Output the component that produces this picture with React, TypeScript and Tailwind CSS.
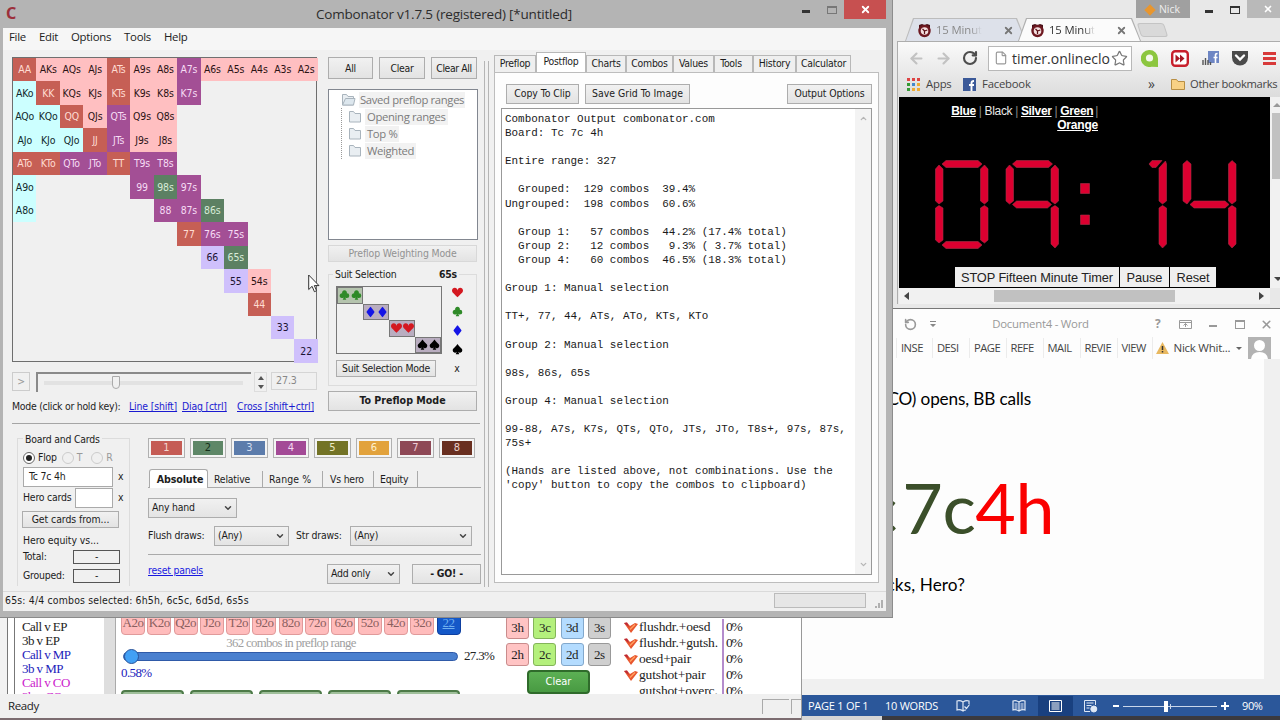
import type { ReactNode } from 'react';
import { clsx } from 'clsx';
import { BsSuitHeartFill, BsSuitClubFill, BsSuitDiamondFill, BsSuitSpadeFill } from 'react-icons/bs';
import { ArrowLeft, ArrowRight, ChevronDown, ChevronUp, RotateCw, RotateCcw, Star, File, X } from 'lucide-react';

const RANKS = 'AKQJT98765432';

// r = group 1, g = group 2, p = group 4, s = suited, o = offsuit, v = pair, . = not in range
const GRID = [
  'rsssrsspsssss',
  'orssrssp.....',
  'oorspss......',
  'ooorpss......',
  'rrpprpp......',
  'o....pgp.....',
  'o.....ppg....',
  '.......rpp...',
  '........vg...',
  '.........vs..',
  '..........r..',
  '...........v.',
  '............v',
];

const CELL_STYLES: Record<string, string> = {
  r: 'bg-[#c65f55] text-[#ffdcd2]',
  g: 'bg-[#5c8063] text-[#d8ecd8]',
  p: 'bg-[#a34f95] text-[#f6dcf4]',
  s: 'bg-[#ffbfc1] text-[#2b1214]',
  o: 'bg-[#ccffff] text-[#10282c]',
  v: 'bg-[#cfc0fc] text-[#1c1433]',
  '.': '',
};

const OUTPUT = `Combonator Output combonator.com
Board: Tc 7c 4h

Entire range: 327

  Grouped:  129 combos  39.4%
Ungrouped:  198 combos  60.6%

  Group 1:   57 combos  44.2% (17.4% total)
  Group 2:   12 combos   9.3% ( 3.7% total)
  Group 4:   60 combos  46.5% (18.3% total)

Group 1: Manual selection

TT+, 77, 44, ATs, ATo, KTs, KTo

Group 2: Manual selection

98s, 86s, 65s

Group 4: Manual selection

99-88, A7s, K7s, QTs, QTo, JTs, JTo, T8s+, 97s, 87s,
75s+

(Hands are listed above, not combinations. Use the
'copy' button to copy the combos to clipboard)`;

const handName = (r: number, c: number) => {
  if (r === c) return RANKS[r] + RANKS[r];
  return r < c ? RANKS[r] + RANKS[c] + 's' : RANKS[c] + RANKS[r] + 'o';
};

function Btn({ children, className }: { children?: ReactNode; className?: string }) {
  return (
    <div className={clsx('flex shrink-0 items-center justify-center whitespace-nowrap border border-[#adadad] bg-gradient-to-b from-[#f1f1f1] to-[#e3e3e3]', className)}>
      {children}
    </div>
  );
}

function Select({ children, className }: { children: ReactNode; className?: string }) {
  return (
    <div className={clsx('flex shrink-0 items-center justify-between border border-[#adadad] bg-gradient-to-b from-[#f1f1f1] to-[#e4e4e4] pl-[3px] pr-[3px]', className)}>
      <span>{children}</span>
      <ChevronDown className="h-[10px] w-[10px] text-[#444]" strokeWidth={3.5} />
    </div>
  );
}

function HandGrid() {
  return (
    <div className="h-[305px] w-[305px] border border-[#6e6e6e]">
      <div className="grid grid-cols-[repeat(13,23.46px)] grid-rows-[repeat(13,23.46px)] text-[10.4px] tracking-[-0.1px]">
        {GRID.map((row, r) =>
          row.split('').map((kind, c) => (
            <div key={`${r}-${c}`} className={clsx('flex items-center justify-center overflow-hidden whitespace-nowrap pt-px', CELL_STYLES[kind])}>
              {kind !== '.' && handName(r, c)}
            </div>
          )),
        )}
      </div>
    </div>
  );
}

function Folder({ open }: { open?: boolean }) {
  return (
    <svg className="h-[13px] w-[15px] shrink-0" viewBox="0 0 15 13" fill="#e9eef2" stroke="#a9b4bd">
      <path d="M1.5 12V1.5h4l1.5 2h5.5V12z" />
      {open && <path d="M1.5 12l3-6.5h9.5L12.5 12z" fill="#dde7ee" />}
    </svg>
  );
}

function RangeTree() {
  return (
    <div className="mt-[10px] flex h-[151px] w-[150px] flex-col border border-[#828790] bg-white pt-px font-['Open_Sans',sans-serif] text-[11.3px] tracking-[-0.35px] text-[#7b7b7b] [font-stretch:normal]">
      <div className="flex h-[17px] items-center gap-[3px] pl-[12px]">
        <Folder open />
        <span className="bg-[#f2f2f2] px-[1px] leading-[16px]">Saved preflop ranges</span>
      </div>
      <div className="ml-[12px] border-l border-dotted border-[#999] pl-[6px]">
        {['Opening ranges', 'Top %', 'Weighted'].map((t) => (
          <div key={t} className="flex h-[17px] items-center gap-[2px]">
            <Folder />
            <span className="bg-[#f2f2f2] px-[2px] leading-[16px]">{t}</span>
          </div>
        ))}
      </div>
    </div>
  );
}

const SUITS = [
  { Icon: BsSuitClubFill, color: 'text-[#2f8a28]' },
  { Icon: BsSuitDiamondFill, color: 'text-[#1414e6]' },
  { Icon: BsSuitHeartFill, color: 'text-[#d41820]' },
  { Icon: BsSuitSpadeFill, color: 'text-black' },
];

function SuitSelection() {
  return (
    <fieldset className="mt-[5px] h-[119px] w-[149px] border border-[#dcdcdc] pl-[7px]">
      <legend className="-ml-[3px] flex h-[14px] w-[126px] items-center justify-between px-[2px] pt-px">
        <span>Suit Selection</span>
        <b className="text-[10.4px]">65s</b>
      </legend>
      <div className="flex">
        <div className="pt-[5px]">
          <div className="grid h-[68px] w-[106px] grid-cols-4 grid-rows-4 border border-[#777]">
            {SUITS.map(({ Icon, color }, r) =>
              SUITS.map((_, c) => (
                <div key={`${r}-${c}`} className={clsx('flex items-center justify-center gap-px', r === c && 'border border-[#777]', r === c && (r === 0 ? 'bg-[#b5c4ae]' : 'bg-[#b9adc0]'))}>
                  {r === c && <Icon className={clsx('h-[12px] w-[11px]', color)} />}
                  {r === c && <Icon className={clsx('h-[12px] w-[11px]', color)} />}
                </div>
              )),
            )}
          </div>
          <Btn className="mt-[6px] h-[17px] w-[100px] tracking-[-0.25px]">Suit Selection Mode</Btn>
        </div>
        <div className="ml-[8px] flex flex-col items-center pt-[2px]">
          {[SUITS[2], SUITS[0], SUITS[1], SUITS[3]].map(({ Icon, color }, i) => (
            <div key={i} className="flex h-[19px] w-[14px] items-center justify-center">
              <Icon className={clsx('h-[11px] w-[11px]', color)} />
            </div>
          ))}
          <span className="mt-[2px]">x</span>
        </div>
      </div>
    </fieldset>
  );
}

const GROUP_COLORS = [
  'bg-[#c55c55] text-[#f3d6cf]',
  'bg-[#5e8767] text-[#15301a]',
  'bg-[#5c7cab] text-[#d3def0]',
  'bg-[#a34a96] text-[#f4d8f0]',
  'bg-[#737326] text-[#ecebc4]',
  'bg-[#e2a23c] text-[#fff0cc]',
  'bg-[#8e4856] text-[#f0ccd4]',
  'bg-[#692f20] text-[#ecd3cb]',
];

function BoardPanel() {
  return (
    <fieldset className="ml-[14px] h-[154px] w-[113px] shrink-0 border border-b-0 border-[#dcdcdc] pl-[5px]">
      <legend className="px-[2px] pt-px leading-[12px]">Board and Cards</legend>
      <div className="mt-[6px] flex h-[13px] items-center">
        <span className="mr-[3px] flex h-[12px] w-[12px] items-center justify-center rounded-full border border-[#666] bg-white">
          <span className="h-[6px] w-[6px] rounded-full bg-[#222]" />
        </span>
        <span>Flop</span>
        <span className="ml-[5px] mr-[3px] h-[12px] w-[12px] rounded-full border border-[#ccc]" />
        <span className="text-[#999]">T</span>
        <span className="ml-[9px] mr-[3px] h-[12px] w-[12px] rounded-full border border-[#ccc]" />
        <span className="text-[#999]">R</span>
      </div>
      <div className="mt-[3px] flex h-[20px] items-center">
        <div className="flex h-[20px] w-[90px] items-center border border-[#aaa] bg-white pl-[5px]">Tc 7c 4h</div>
        <span className="ml-[5px]">x</span>
      </div>
      <div className="mt-px flex h-[20px] items-center">
        <span className="w-[52px]">Hero cards</span>
        <div className="h-[20px] w-[38px] border border-[#aaa] bg-white" />
        <span className="ml-[5px]">x</span>
      </div>
      <Btn className="-ml-px mt-[3px] h-[17px] w-[97px] tracking-[-0.05px]">Get cards from...</Btn>
      <div className="mt-[6px] leading-[13px] tracking-[-0.05px]">Hero equity vs...</div>
      {['Total:', 'Grouped:'].map((t) => (
        <div key={t} className="mt-px flex h-[18px] items-center">
          <span className="w-[50px]">{t}</span>
          <div className="flex h-[14px] w-[47px] items-center justify-center border border-[#555]">-</div>
        </div>
      ))}
    </fieldset>
  );
}

function FilterPanel() {
  return (
    <div className="ml-[18px] w-[333px]">
      <div className="mt-[6px] flex gap-[5px]">
        {GROUP_COLORS.map((c, i) => (
          <div key={c} className="h-[20px] w-[36.5px] border border-[#b0b0b0] bg-[#f4f4f4] p-[2px]">
            <div className={clsx('flex h-full items-center justify-center text-[11px]', c)}>{i + 1}</div>
          </div>
        ))}
      </div>
      <div className="mt-[11px] flex h-[19px] items-center border-b border-[#aaa] pt-px">
        <b className="ml-px flex h-[19px] w-[59px] items-center justify-center rounded-t-[3px] border border-b-0 border-[#aaa] bg-white pl-[3px] pt-px text-[10.6px] tracking-[-0.1px]">Absolute</b>
        <span className="w-[55px] border-r border-[#aaa] pl-[6px] pt-px leading-[15px]">Relative</span>
        <span className="w-[60px] border-r border-[#aaa] pl-[6px] pt-px leading-[15px] tracking-[0.1px]">Range %</span>
        <span className="w-[51px] border-r border-[#aaa] pl-[7px] pt-px leading-[15px]">Vs hero</span>
        <span className="w-[44px] border-r border-[#aaa] pl-[6px] pt-px leading-[15px]">Equity</span>
      </div>
      <Select className="mt-[10px] h-[20px] w-[89px]">Any hand</Select>
      <div className="mt-[8px] flex h-[20px] items-center">
        <span className="w-[66px] tracking-[-0.2px]">Flush draws:</span>
        <Select className="h-[20px] w-[75px]">(Any)</Select>
        <span className="ml-[7px] w-[54px]">Str draws:</span>
        <Select className="h-[20px] w-[122px]">(Any)</Select>
      </div>
      <div className="mt-[8px] border-b border-[#aaa]" />
      <div className="mt-[9px] flex h-[20px]">
        <span className="w-[179px] leading-[13px] text-[#1a1ae0] underline">reset panels</span>
        <Select className="h-[20px] w-[73px]">Add only</Select>
        <Btn className="ml-[12px] h-[20px] w-[69px] font-bold">- GO! -</Btn>
      </div>
    </div>
  );
}

const TABS: [string, string][] = [
  ['Preflop', 'w-[42px]'],
  ['Postflop', 'w-[50px]'],
  ['Charts', 'w-[40px]'],
  ['Combos', 'w-[47px]'],
  ['Values', 'w-[41px]'],
  ['Tools', 'w-[39px]'],
  ['History', 'w-[43px]'],
  ['Calculator', 'w-[55px]'],
];

function OutputPanel() {
  return (
    <div className="ml-[5px] w-[385px]">
      <div className="flex h-[20px] items-end">
        {TABS.map(([t, w]) => (
          <div
            key={t}
            className={clsx(
              'flex shrink-0 items-center justify-center border border-b-0 border-[#b8b8b8] tracking-[-0.25px]',
              w,
              t === 'Postflop' ? 'h-[20px] bg-white pb-[2px]' : t === 'Tools' ? 'h-[17px] bg-[#efefef] pr-[5px]' : 'h-[17px] bg-[#efefef]',
            )}
          >
            {t}
          </div>
        ))}
      </div>
      <div className="flex h-[511px] flex-col border border-[#bdbdbd] bg-[#fdfdfd] px-[6px] pb-[7px] pt-[11px]">
        <div className="flex">
          <Btn className="ml-[5px] h-[20px] w-[73px] tracking-[-0.05px]">Copy To Clip</Btn>
          <Btn className="ml-[6px] h-[20px] w-[105px] tracking-[0.03px]">Save Grid To Image</Btn>
          <Btn className="ml-auto h-[20px] w-[85px] tracking-[-0.1px]">Output Options</Btn>
        </div>
        <div className="mt-[4px] flex flex-1 justify-between border border-[#999] bg-white">
          <pre className="pl-[3px] pt-[3px] font-['Liberation_Mono',monospace] text-[10.93px] leading-[14.1px] tracking-normal text-[#1a1a1a]">{OUTPUT}</pre>
          <div className="flex w-[16px] flex-col items-center justify-between bg-[#f3f3f3] py-[5px]">
            <ChevronUp className="h-[9px] w-[9px] text-[#b5b5b5]" strokeWidth={3.5} />
            <ChevronDown className="h-[9px] w-[9px] text-[#b5b5b5]" strokeWidth={3.5} />
          </div>
        </div>
      </div>
    </div>
  );
}

function Combonator() {
  return (
    <div className="absolute left-0 top-0 flex h-[617px] w-[893px] flex-col border-r border-[#8d8d8d] bg-[#b4b4b4] pl-[3px] pr-[6px] shadow-[0_1px_0_#8a8a8a] font-['DejaVu_Sans_Condensed','DejaVu_Sans',sans-serif] text-[10.4px] tracking-[-0.2px] text-[#1c1c1c] [font-stretch:condensed]">
      <div className="flex h-[28px] shrink-0 [font-stretch:normal]">
        <b className="w-[120px] pl-[3px] font-['Noto_Sans',sans-serif] text-[16px] leading-[27px] text-[#9c2f3b]">C</b>
        <span className="w-[642px] text-center font-['Open_Sans',sans-serif] text-[13.5px] leading-[28px] tracking-[-0.2px] text-[#2c2c2c]">
          Combonator v1.7.5 (registered) [*untitled]
        </span>
        <div className="ml-[37px] mt-[10px] h-[3px] w-[8px] bg-[#333]" />
        <div className="ml-[17px] mt-[6px] h-[8px] w-[10px] border border-t-2 border-[#777]" />
        <div className="ml-[7px] flex h-[19px] w-[42px] items-center justify-center bg-[#c75050]">
          <X className="h-[11px] w-[11px] text-white" strokeWidth={4} />
        </div>
      </div>

      <div className="flex h-[583px] flex-col bg-[#f0f0f0]">
        <div className="flex h-[22px] shrink-0 gap-[13px] bg-[#f6f6f6] pl-[6px] font-['Open_Sans',sans-serif] text-[11.4px] leading-[18px] tracking-[-0.28px] text-[#222] [font-stretch:normal]">
          {['File', 'Edit', 'Options', 'Tools', 'Help'].map((m) => (
            <span key={m}>{m}</span>
          ))}
        </div>

        <div className="flex h-[541px]">
          <div className="w-[481px]">
            <div className="ml-[9px] flex h-[374px] w-[468px] border-b border-[#a5a5a5] pt-[7px]">
              <div className="w-[305px] shrink-0">
                <HandGrid />
                <div className="mt-[10px] flex h-[20px]">
                  <div className="flex h-[19px] w-[18px] items-center justify-center border border-[#ccc] text-[#999]">&gt;</div>
                  <div className="ml-[6px] flex w-[215px] items-center border-l-2 border-t-2 border-[#8a8a8a] pl-[6px] pr-[8px]">
                    <div className="relative h-[4px] w-full bg-[#e2e2e2]">
                      <div className="absolute left-[68px] top-[-5px] h-[13px] w-[8px] rounded-b-[4px] border border-[#aaa] bg-[#f0f0f0]" />
                    </div>
                  </div>
                  <div className="ml-[3px] flex w-[13px] flex-col items-center justify-center gap-[5px] border border-[#ddd]">
                    <i className="border-x-[3px] border-b-[4px] border-x-transparent border-b-[#555]" />
                    <i className="border-x-[3px] border-t-[4px] border-x-transparent border-t-[#555]" />
                  </div>
                  <div className="ml-[4px] flex h-[18px] flex-1 items-center border border-[#d5d5d5] pl-[4px] text-[10.6px] tracking-[-0.1px] text-[#888]">27.3</div>
                </div>
                <div className="mt-[7px] flex whitespace-nowrap leading-[14px] tracking-[-0.25px]">
                  <span className="w-[117px]">Mode (click or hold key):</span>
                  <span className="w-[53px] tracking-[-0.15px] text-[#1a1ad0] underline">Line [shift]</span>
                  <span className="w-[55px] tracking-[-0.2px] text-[#1a1ad0] underline">Diag [ctrl]</span>
                  <span className="tracking-[-0.12px] text-[#1a1ad0] underline">Cross [shift+ctrl]</span>
                </div>
              </div>
              <div className="ml-[11px] w-[150px] shrink-0">
                <div className="flex gap-[6px]">
                  <Btn className="h-[22px] w-[45px] pt-[2px]">All</Btn>
                  <Btn className="h-[22px] w-[46px] pt-[2px] tracking-[-0.3px]">Clear</Btn>
                  <Btn className="h-[22px] w-[46px] pt-[2px] tracking-[-0.4px]">Clear All</Btn>
                </div>
                <RangeTree />
                <Btn className="mt-[5px] h-[17px] w-[149px] border-[#d8d8d8] pt-px tracking-[-0.12px] text-[#929292]">Preflop Weighting Mode</Btn>
                <SuitSelection />
                <Btn className="mt-[5px] h-[20px] w-[149px] text-[10.6px] font-bold tracking-normal">To Preflop Mode</Btn>
              </div>
            </div>
            <div className="flex pt-[8px]">
              <BoardPanel />
              <FilterPanel />
            </div>
          </div>
          <div className="mt-[11px] h-[526px] w-[5px] border-x border-[#b5b5b5]" />
          <div className="pt-[2px]">
            <OutputPanel />
          </div>
        </div>

        <div className="flex h-[20px] items-center border-t border-[#dadada] pb-px pl-[2px] tracking-[0.18px]">
          <span>65s: 4/4 combos selected: 6h5h, 6c5c, 6d5d, 6s5s</span>
          <div className="mb-px ml-auto mr-[9px] h-[15px] w-[92px] border border-[#bbb] bg-[#e6e6e6]" />
          <svg className="mr-[2px] mt-[5px] h-[9px] w-[9px]" viewBox="0 0 9 9" fill="#b0b0b0">
            <path d="M0 7h2v2H0zM3 4h2v5H3zM6 1h2v8H6z" />
          </svg>
        </div>
      </div>
    </div>
  );
}

const SAVED: [string, string][] = [
  ['Call v EP', 'text-[#222]'],
  ['3b v EP', 'text-[#222]'],
  ['Call v MP', 'text-[#2222bb]'],
  ['3b v MP', 'text-[#2222bb]'],
  ['Call v CO', 'text-[#cc22cc]'],
  ['3b v CO', 'text-[#cc22cc]'],
];

const CARD_COLORS: [string, string][] = [
  ['h', 'bg-[#ffc4c4] border-[#c98c8c]'],
  ['c', 'bg-[#b4f07c] border-[#84b45a]'],
  ['d', 'bg-[#b4dcff] border-[#82a8cc]'],
  ['s', 'bg-[#cfcfcf] border-[#999999]'],
];

function Check({ hidden }: { hidden?: boolean }) {
  return (
    <svg className={clsx('mr-px h-[11px] w-[14px] shrink-0', hidden && 'invisible')} viewBox="0 0 14 11">
      <path d="M0 1l3-.5 3 3.500 5-3 3 1-7 9z" fill="#e8562e" />
      <path d="M0 1l3-.5 2 4.500z" fill="#b8283c" />
      <path d="M6 7.500l5-5" stroke="#ffa060" strokeWidth="1.500" />
    </svg>
  );
}

function RangeTool() {
  return (
    <div className="absolute left-0 top-[600px] flex h-[120px] w-[802px] flex-col border-r border-[#999] bg-white font-['Liberation_Serif',serif] text-[13.5px] text-[#222]">
      <div className="flex h-[94px] shrink-0 overflow-hidden">
        <div className="w-[8px] border-r border-[#777] bg-[#f2f2f2]" />
        <div className="w-[7px] border-r border-[#777]" />
        <div className="w-[89px] pl-[7px] pt-[20px] text-[13px] leading-[14.1px] tracking-[-0.55px]">
          {SAVED.map(([t, c]) => (
            <div key={t} className={c}>{t}</div>
          ))}
        </div>
        <div className="w-[12px] border-r border-[#aaa] bg-[#dedede]" />
        <div className="ml-[5px] w-[380px]">
          <div className="mt-[11px] flex gap-[2.3px] text-[#8a5f5f]">
            {'AKQJT98765432'.split('').map((r) => (
              <div
                key={r}
                className={clsx(
                  'flex h-[24px] w-[24px] shrink-0 items-center justify-center rounded-[4px] border text-[13px] tracking-[-0.5px]',
                  r === '2' ? 'border-[#0e3fa0] bg-[#1458c8] text-[#6fb0f0] underline' : 'border-[#e09a9a] bg-[#ffbcbc]',
                )}
              >
                {r === '2' ? '22' : r + '2o'}
              </div>
            ))}
          </div>
          <div className="w-[340px] text-center text-[12.8px] leading-[16px] tracking-[-0.65px] text-[#a0a0a0]">362 combos in preflop range</div>
          <div className="flex h-[10px] items-center">
            <div className="relative ml-[2px] h-[9px] w-[335px] rounded-full border border-[#2f5aa8] bg-[#4a80cf]">
              <div className="absolute -top-[4px] left-0 h-[15px] w-[15px] rounded-full border border-[#2a5298] bg-[#42a0f5]" />
            </div>
            <span className="ml-[6px] text-[13px] tracking-[-0.7px]">27.3%</span>
          </div>
          <div className="mt-[4px] text-[13px] leading-[16px] tracking-[-0.6px] text-[#2222bb]">0.58%</div>
          <div className="mt-[9px] flex gap-[6px]">
            {[0, 1, 2, 3, 4].map((i) => (
              <div key={i} className="h-[20px] w-[63px] rounded-[4px] border-2 border-[#4d7a48] bg-[#9fbf9a]" />
            ))}
          </div>
        </div>
        <div className="ml-[5px] w-[118px] pt-[16px]">
          {['3', '2'].map((r) => (
            <div key={r} className="mb-[4px] flex gap-[4.3px] text-[13px] tracking-[-0.3px]">
              {CARD_COLORS.map(([s, c]) => (
                <div key={s} className={clsx('flex h-[23px] w-[23px] items-center justify-center rounded-[3px] border pt-px', c)}>{r + s}</div>
              ))}
            </div>
          ))}
          <div className="ml-[21px] flex h-[24px] w-[63px] items-center justify-center rounded-[4px] border-2 border-[#2f6b2b] bg-gradient-to-b from-[#5cb054] to-[#489a42] font-['DejaVu_Sans_Condensed','DejaVu_Sans',sans-serif] text-[11px] text-white [font-stretch:condensed]">
            Clear
          </div>
        </div>
        <div className="flex pt-[19px] leading-[16.1px]">
          <div className="w-[100px] border-r-2 border-[#b48ccc]">
            {['flushdr.+oesd', 'flushdr.+gutsh.', 'oesd+pair', 'gutshot+pair', 'gutshot+overc.'].map((t, i) => (
              <div key={t} className="flex h-[16.1px] items-center whitespace-nowrap tracking-[-0.15px]">
                <Check hidden={i === 4} />
                {t}
              </div>
            ))}
          </div>
          <div className="pl-[2px] tracking-[-1.2px]">
            {[0, 1, 2, 3, 4].map((i) => (
              <div key={i}>0%</div>
            ))}
          </div>
        </div>
      </div>
      <div className="flex h-[24px] items-center bg-[#f0f0f0] pl-[8px] font-['Open_Sans',sans-serif] text-[11.5px] tracking-[-0.4px]">
        Ready
        <div className="ml-auto h-[15px] w-[27px] border-l border-t border-[#aaa]" />
        <div className="ml-[2px] h-[15px] w-[10px] border-l border-t border-[#aaa]" />
      </div>
      <div className="h-[2px] bg-[#7c6c70]" />
    </div>
  );
}

function Clock() {
  return (
    <svg className="h-[15px] w-[13px] shrink-0" viewBox="0 0 13 15">
      <path d="M1 2l3-1 2.5 1L9 1l3 1v3H1z" fill="#4a1219" />
      <circle cx="6.5" cy="8" r="5" fill="#f3dede" stroke="#6d1820" strokeWidth="2.4" />
      <path d="M6.5 8L4.5 5.8M6.5 8l2.8-1M6.5 8v3" stroke="#5a1016" strokeWidth="1.2" />
    </svg>
  );
}

// Bars of a seven segment digit, 53x89
const SEGMENTS = {
  a: '7,4 11,0.5 43,0.5 47,4 43,7.5 11,7.5',
  b: '49.5,5 53,9 53,41 49.5,44 45.5,41 45.5,9',
  c: '49.5,45.5 53,48 53,80 49.5,83 45.5,80 45.5,48',
  d: '7,85 11,81.5 43,81.5 47,85 43,88.5 11,88.5',
  e: '4,45.5 8,48 8,80 4,83 0.5,80 0.5,48',
  f: '4,5 8,9 8,41 4,44 0.5,41 0.5,9',
  g: '7,44.5 11,41 42,41 46,44.5 42,48 11,48',
};

function Digit({ segs, x }: { segs: string; x: number }) {
  return (
    <g transform={`translate(${x} 0)`}>
      {segs.split('').map((s) => (
        <polygon key={s} points={SEGMENTS[s as keyof typeof SEGMENTS]} />
      ))}
    </g>
  );
}

function Timer() {
  return (
    <svg className="ml-[36px] mt-[28px] h-[90px] w-[303px]" viewBox="0 0 303 90" fill="#dc0030" stroke="#a83048" strokeWidth="0.6">
      <Digit segs="abcdef" x={0} />
      <Digit segs="abfg" x={70.5} />
      <polygon points="120,45.5 123.5,48 123.5,84 120,88 116,84 116,48" />
      <path d="M145.5 23.500h9v10h-9zM145.5 55h9v9.500h-9z" />
      <polygon points="214,4 217,0.5 227,0.5 221,7.5 217,7.5" />
      <polygon points="230.5,1 231.5,4 231.5,41 227.5,44 224,41 224,8" />
      <polygon points="227.5,45.5 231.5,48 231.5,84 227.5,88 224,84 224,48" />
      <polygon points="252,0.5 256,4 256,39 252,44 248,41 248,4" />
      <polygon points="255,44.5 259,41 290,41 294,44.5 290,48 259,48" />
      <polygon points="297,0.5 301,4 301,41 297,44 293.5,41 293.5,4" />
      <polygon points="297,45.5 301,48 301,84 297,88 293.5,84 293.5,48" />
    </svg>
  );
}

function ChromeTab({ active }: { active?: boolean }) {
  return (
    <div className={clsx('h-[23px] shrink-0 p-px pb-0 [clip-path:polygon(0_100%,8px_0,calc(100%-9px)_0,100%_100%)]', active ? '-ml-[8px] w-[123px] bg-[#b0b0b0]' : 'w-[121px] bg-[#bcbcbc]')}>
      <div className={clsx('flex h-full items-center pl-[12px] [clip-path:polygon(0_100%,8px_0,calc(100%-9px)_0,100%_100%)]', active ? 'bg-[#fbfbfb] text-[#333]' : 'bg-[#dde1ea] text-[#8a8a8a]')}>
        <Clock />
        <span className="ml-[5px] w-[46px] overflow-hidden whitespace-nowrap text-[11.3px] tracking-[-0.1px] [mask-image:linear-gradient(to_right,black_75%,transparent)]">15 Minute</span>
        <X className="ml-[21px] h-[11px] w-[11px] text-[#777]" strokeWidth={4} />
      </div>
    </div>
  );
}

function AppsIcon() {
  const colors = ['#d44', '#d44', '#d44', '#393', '#48c', '#ea3', '#393', '#ea3', '#ea3'];
  return (
    <svg className="h-[13px] w-[13px]" viewBox="0 0 13 13">
      {colors.map((c, i) => (
        <rect key={i} x={(i % 3) * 5} y={Math.floor(i / 3) * 5} width="3" height="3" fill={c} />
      ))}
    </svg>
  );
}

function Chrome() {
  return (
    <div className="absolute left-[893px] top-0 flex h-[309px] w-[387px] flex-col border-b border-[#777] bg-[#e8e8e8] font-['Open_Sans',sans-serif] text-[#333]">
      <div className="relative flex h-[41px] shrink-0 items-end pl-[12px]">
        <ChromeTab />
        <ChromeTab active />
        <div className="mb-[4px] ml-[-2px] h-[14px] w-[27px] skew-x-[18deg] rounded-[3px] border border-[#c4c4c4] bg-[#d9d9d9]" />
        <div className="absolute right-0 top-0 flex">
          <div className="flex h-[18px] w-[54px] items-center justify-center gap-[5px] bg-[#a0a0a0] pt-[2px] text-[10.5px] text-[#eee]">
            <span className="h-[8px] w-[8px] rotate-45 bg-[#e8962e]" />
            Nick
          </div>
          <div className="ml-[15px] mt-[10px] h-[3px] w-[8px] bg-[#333]" />
          <div className="ml-[17px] mt-[6px] h-[8px] w-[10px] border border-t-2 border-[#333]" />
          <div className="ml-[7px] flex h-[18px] w-[33px] items-center justify-center bg-[#b9b9b9] pl-[9px]">
            <X className="h-[10px] w-[10px] text-white" strokeWidth={4} />
          </div>
        </div>
      </div>
      <div className="ml-[4px] h-[56px] shrink-0 border-l border-t border-[#adadad] bg-gradient-to-b from-[#fafafa] to-[#dcdcdc]">
        <div className="flex h-[32px] items-center pl-[10px]">
          <ArrowLeft className="h-[17px] w-[17px] text-[#c2c2c2]" strokeWidth={3} />
          <ArrowRight className="ml-[10px] h-[17px] w-[17px] text-[#c2c2c2]" strokeWidth={3} />
          <RotateCw className="ml-[10px] h-[16px] w-[16px] text-[#4d4d4d]" strokeWidth={3.2} />
          <div className="ml-[10px] flex h-[25px] w-[144px] shrink-0 items-center border border-[#b8b8b8] bg-white pl-[5px]">
            <File className="h-[14px] w-[14px] text-[#999]" strokeWidth={2} />
            <span className="ml-[4px] w-[99px] text-[14px] text-[#333]">timer.onlineclo</span>
            <Star className="h-[17px] w-[17px] shrink-0 text-[#777]" strokeWidth={1.7} />
          </div>
          <svg className="ml-[9px] h-[17px] w-[17px] shrink-0" viewBox="0 0 17 17">
            <path d="M8.500 0a8.500 8.500 0 1 0 2 16.700L17 17V8.500A8.500 8.500 0 0 0 8.500 0z" fill="#8cc63f" />
            <circle cx="8.500" cy="8" r="3.600" fill="#f4f8ee" />
          </svg>
          <svg className="ml-[13px] h-[17px] w-[18px] shrink-0" viewBox="0 0 18 17">
            <rect x="1.200" y="1.200" width="15.600" height="14.600" rx="3" fill="#fff" stroke="#c8202c" strokeWidth="2.400" />
            <path d="M4.500 4.500L9 8.500l-4.500 4zM9 4.500l4.500 4-4.500 4z" fill="#a81824" />
          </svg>
          <svg className="ml-[13px] h-[15px] w-[17px] shrink-0" viewBox="0 0 17 15">
            <rect x="6" width="11" height="12" fill="#6e86c4" />
            <path d="M13.500 12V6.500h2M13.500 7V4q0-1.500 2-1.500M11.500 6.500h2" stroke="#fff" strokeWidth="1.600" fill="none" />
            <path d="M1 14V9M3.500 14V7M6 14V9M8.500 14v-3" stroke="#555" strokeWidth="1.400" />
          </svg>
          <svg className="ml-[12px] h-[16px] w-[18px] shrink-0" viewBox="0 0 18 16">
            <path d="M1 1h16v6.500a8 8 0 0 1-16 0z" fill="#4b4b4b" />
            <path d="M5 5.500l4 4 4-4" stroke="#fff" strokeWidth="2.400" fill="none" strokeLinecap="round" />
          </svg>
          <div className="ml-[14px] flex h-[13px] w-[13px] shrink-0 flex-col justify-between">
            <i className="h-[3px] bg-[#d83a3a]" />
            <i className="h-[3px] bg-[#d83a3a]" />
            <i className="h-[3px] bg-[#d83a3a]" />
          </div>
        </div>
        <div className="flex h-[20px] items-center whitespace-nowrap pl-[9px] text-[11.3px] tracking-[-0.2px] text-[#444]">
          <AppsIcon />
          <span className="ml-[6px] w-[37px]">Apps</span>
          <svg className="h-[13px] w-[13px]" viewBox="0 0 13 13">
            <rect width="13" height="13" fill="#3b5998" />
            <path d="M8.500 13V5q0-2 2.500-2M6 7h5" stroke="#fff" strokeWidth="1.900" fill="none" />
          </svg>
          <span className="ml-[6px] w-[166px]">Facebook</span>
          <span className="w-[23px] text-[14px] leading-[14px]">»</span>
          <svg className="h-[12px] w-[14px]" viewBox="0 0 14 12">
            <path d="M.5 11.500V1.500h5l1.500 2h6.500v8z" fill="#f8d185" stroke="#b88f45" />
          </svg>
          <span className="ml-[5px] text-[11.2px] tracking-[-0.3px]">Other bookmarks</span>
        </div>
      </div>
      <div className="ml-[4px] flex border-l border-[#adadad] pl-px">
        <div className="h-[207px] w-[371px]">
          <div className="h-[191px] overflow-hidden bg-black font-['Liberation_Sans',sans-serif]">
            <div className="flex pl-[52px] pt-[8px] text-[12px] leading-[13.500px] tracking-[-0.35px] text-[#888]">
              <div className="w-[147px] whitespace-nowrap text-right">
                <b className="text-white underline">Blue</b> <span>|</span> <span className="text-[#e8e8e8]">Black</span> <span>|</span> <b className="text-white underline">Silver</b> <span>|</span> <b className="mr-[-1px] text-white underline">Green</b> <span>|</span>
                <br />
                <b className="tracking-[-0.2px] text-white underline">Orange</b>
              </div>
            </div>
            <Timer />
            <div className="ml-[56px] mt-[17px] flex h-[20px] text-[12.8px] tracking-[-0.1px] text-[#222]">
              <div className="flex h-[20px] w-[164px] items-center justify-center bg-[#efefef] pt-px">STOP Fifteen Minute Timer</div>
              <div className="ml-px flex h-[20px] w-[49px] items-center justify-center bg-[#efefef] pt-px">Pause</div>
              <div className="ml-px flex h-[20px] w-[46px] items-center justify-center bg-[#efefef] pt-px">Reset</div>
            </div>
          </div>
          <div className="flex h-[16px] items-center bg-[#f1f1f1] pl-[5px]">
            <i className="border-y-[4px] border-r-[5px] border-y-transparent border-r-[#444]" />
            <div className="ml-[85px] h-[12px] w-[181px] bg-[#c1c1c1]" />
            <i className="ml-[84px] border-y-[4px] border-l-[5px] border-y-transparent border-l-[#444]" />
          </div>
        </div>
        <div className="flex h-[191px] w-[10px] flex-col items-end bg-[#f1f1f1] pt-[6px]">
          <i className="mr-[-1px] border-x-[4px] border-b-[4px] border-x-transparent border-b-[#999]" />
          <div className="mt-[6px] h-[66px] w-[8px] bg-[#c1c1c1]" />
          <i className="mr-[-2px] mt-[98px] border-x-[4px] border-t-[4px] border-x-transparent border-t-[#444]" />
        </div>
      </div>
    </div>
  );
}

const RIBBON: [string, string][] = [
  ['INSE', 'w-[36px]'],
  ['DESI', 'w-[37px]'],
  ['PAGE', 'w-[36.5px]'],
  ['REFE', 'w-[37px]'],
  ['MAIL', 'w-[37px]'],
  ['REVIE', 'w-[37px]'],
  ['VIEW', 'w-[35px]'],
];

function Word() {
  return (
    <div className="absolute left-[802px] top-[309px] flex h-[411px] w-[478px] flex-col bg-[#fdfdfd] font-['Open_Sans',sans-serif] text-[#444]">
      <div className="flex h-[28px] shrink-0 items-center pl-[102px] pt-[2px] text-[#999]">
        <RotateCcw className="h-[13px] w-[13px]" strokeWidth={3} />
        <svg className="ml-[13px] h-[7px] w-[6px]" viewBox="0 0 6 7" fill="#888">
          <path d="M0 0h6v1H0zM0 3h6L3 6z" />
        </svg>
        <span className="ml-[56px] w-[97px] whitespace-nowrap text-center text-[11.4px] tracking-[-0.25px]">Document4 - Word</span>
        <b className="ml-[66px] w-[10px] text-[12px]">?</b>
        <svg className="ml-[14px] h-[9px] w-[13px]" viewBox="0 0 13 9" fill="none" stroke="#999">
          <path d="M.5.5h12v8H.5zM.5 2.500h12M6.500 7V3.500M4.500 5.500l2-2 2 2" />
        </svg>
        <i className="ml-[17px] mt-[3px] h-[2px] w-[8px] bg-[#999]" />
        <i className="ml-[18px] h-[9px] w-[10px] border border-t-2 border-[#999]" />
        <X className="ml-[15px] h-[13px] w-[13px]" strokeWidth={3} />
      </div>
      <div className="flex h-[22px] shrink-0 items-center whitespace-nowrap pl-[94px] text-[11.2px] tracking-[-0.5px]">
        {RIBBON.map(([t, w]) => (
          <div key={t} className={clsx('shrink-0 border-l border-[#ececec] pl-[4px] leading-[20px]', w)}>{t}</div>
        ))}
        <div className="flex items-center border-l border-[#ececec] pl-[3px]">
          <svg className="h-[12px] w-[13px]" viewBox="0 0 13 12">
            <path d="M6.500 0L13 12H0z" fill="#e8b860" />
            <path d="M6.500 4v4M6.500 9v1.500" stroke="#333" strokeWidth="1.500" />
          </svg>
          <span className="ml-[5px] w-[62px] text-[11.5px] tracking-[-0.25px]">Nick Whit...</span>
          <i className="border-x-[3px] border-t-[3px] border-x-transparent border-t-[#666]" />
          <svg className="ml-[6px] h-[22px] w-[23px]" viewBox="0 0 23 22">
            <rect width="23" height="22" fill="#b3b3b3" />
            <circle cx="11.500" cy="8.500" r="5.500" fill="#fff" />
            <path d="M3 22q1-7 8.500-7t8.500 7z" fill="#fff" />
          </svg>
        </div>
      </div>
      <div className="flex flex-1 bg-[#f0f0f0]">
        <div className="h-[320px] w-[462px] bg-[#fdfdfd] font-['Lato',sans-serif] text-black">
          <div className="flex w-[229px] justify-end whitespace-nowrap pt-[28px] text-[17.2px] leading-[24px] tracking-[-0.15px]">Hero (CO) opens, BB calls</div>
          <div className="mt-[52px] flex h-[90px] w-[252px] justify-end whitespace-nowrap text-[70px] leading-[88px] tracking-[-0.5px] text-[#3b4f2a]">
            <span className="mr-[5px]">Tc</span>7c<span className="text-[#fa0000]">4h</span>
          </div>
          <div className="mt-[20px] flex w-[163px] justify-end whitespace-nowrap text-[17.2px] leading-[24px] tracking-[0.1px]">BB checks, Hero?</div>
        </div>
      </div>
      <div className="flex h-[21px] shrink-0 items-center whitespace-nowrap bg-[#2b579a] pl-[6px] pt-px text-[11px] tracking-[-0.1px] text-white">
        <span className="w-[77px] tracking-[-0.25px]">PAGE 1 OF 1</span>
        <span className="w-[71px] tracking-[-0.25px]">10 WORDS</span>
        <svg className="h-[12px] w-[14px]" viewBox="0 0 14 12" fill="none" stroke="#dfe8f5" strokeWidth="1.200">
          <path d="M7 2v9M7 2Q4 0 1 1v9q3-1 6 1 1-1 3-1M7 2q3-2 6-1v3M8.500 6.500l2 2 3-4" />
        </svg>
        <svg className="ml-[42px] h-[12px] w-[14px]" viewBox="0 0 14 12" fill="none" stroke="#dfe8f5" strokeWidth="1.200">
          <path d="M7 2v9M7 2Q4 0 1 1v9q3-1 6 1 3-2 6-1V1q-3-1-6 1M2.500 4h3M2.500 6h3M2.500 8h3M8.500 4h3M8.500 6h3M8.500 8h3" />
        </svg>
        <div className="ml-[12px] flex h-[20px] w-[35px] items-center justify-center bg-[#19407f]">
          <svg className="h-[12px] w-[13px]" viewBox="0 0 13 12" fill="none" stroke="#fff">
            <path d="M.5.5h12v11H.5zM2.500 3h8M2.500 5h8M2.500 7h8M2.500 9h8" />
          </svg>
        </div>
        <svg className="ml-[11px] h-[13px] w-[14px]" viewBox="0 0 14 13" fill="none" stroke="#dfe8f5">
          <path d="M6 11.500H.5V.5h11V5M2.500 3h7M2.500 5.500h5M2.500 8h3" />
          <circle cx="9.800" cy="9" r="3" fill="#dfe8f5" />
        </svg>
        <i className="ml-[15px] h-[2px] w-[6px] bg-white" />
        <div className="relative ml-[4px] h-px w-[94px] bg-[#c9d6ea]">
          <i className="absolute -top-[5px] left-[41px] h-[11px] w-[4px] bg-white" />
          <i className="absolute -top-[2px] left-[47px] h-[5px] w-px bg-[#c9d6ea]" />
        </div>
        <svg className="ml-[4px] h-[8px] w-[8px]" viewBox="0 0 8 8">
          <path d="M4 0v8M0 4h8" stroke="#fff" strokeWidth="2" />
        </svg>
        <span className="ml-[13px] tracking-[-0.4px]">90%</span>
      </div>
      <div className="flex h-[4px] shrink-0 bg-[#3a3a40]">
        <div className="w-[80px] bg-[#d6d6d6]" />
      </div>
    </div>
  );
}

export default function App() {
  return (
    <div className="relative h-[720px] w-[1280px] overflow-hidden bg-[#f0f0f0]">
      <RangeTool />
      <Chrome />
      <Word />
      <Combonator />
      {/* mouse pointer */}
      <svg className="absolute left-[308px] top-[274px] h-[19px] w-[12px]" viewBox="0 0 12 19">
        <path d="M.7 1v14.500l3.400-3.200 2.300 5.400 2.200-1-2.300-5.100H11z" fill="#fff" stroke="#333" />
      </svg>
    </div>
  );
}
